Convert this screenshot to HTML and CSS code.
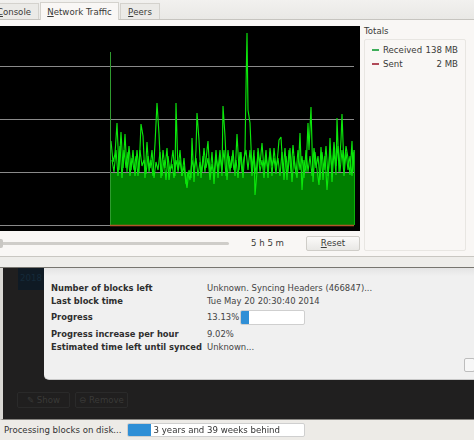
FILE: index.html
```html
<!DOCTYPE html>
<html lang="en">
<head>
<meta charset="utf-8">
<title>Network Traffic</title>
<link rel="stylesheet" href="styles.css">
</head>
<body>
<div class="screen">
  <section class="debug-window">
    <nav class="tabs">
      <span class="tab tab-first"><u>C</u>onsole</span>
      <span class="tab tab-active"><u>N</u>etwork Traffic</span>
      <span class="tab tab-last"><u>P</u>eers</span>
    </nav>
    <div class="panel">
      <div class="graph-col">
        <svg class="graph" viewBox="0 26 360 205" width="360" height="205" aria-hidden="true">
          <rect class="graph-bg" x="0" y="26" width="360" height="205"/>
          <g class="graph-grid">
            <line x1="0" y1="66.5" x2="354" y2="66.5"/>
            <line x1="0" y1="119.5" x2="354" y2="119.5"/>
            <line x1="0" y1="172.5" x2="354" y2="172.5"/>
            <line x1="0" y1="225.5" x2="354" y2="225.5"/>
          </g>
          <rect class="graph-fill" x="110" y="173" width="245" height="52"/>
          <polyline class="graph-trace" points="112,160 114,172 116,150 118,176 120,146 122,178 124,150 126,168 128,152 130,176 132,158 134,170 136,156 138,176 140,150 142,166 144,160 146,174 148,156 150,168 152,150 154,178 156,162 158,170 160,152 162,176 164,160 166,180 168,156 170,172 172,164 174,178 176,160 178,170 180,150 182,176 184,166 186,184 188,172 190,180 192,160 194,170 196,158 198,176 200,162 202,172 204,148 206,168 208,158 210,180 212,164 214,176 216,150 218,178 220,156 222,170 224,150 226,176 228,150 230,172 232,156 234,170 236,160 238,178 240,152 242,172 244,158 246,150 248,170 250,150 252,176 254,156 256,174 258,152 260,172 262,160 264,178 266,156 268,170 270,152 272,176 274,148 276,168 278,158 280,176 282,152 284,180 286,156 288,172 290,148 292,182 294,156 296,174 298,150 300,170 302,156 304,178 306,150 308,172 310,156 312,176 314,148 316,168 318,156 320,180 322,152 324,170 326,146 328,176 330,150 332,170 334,142 336,166 338,146 340,172 342,150 344,176 346,152 348,170 350,156 352,176 354,152"/>
          <polyline class="graph-trace" points="111,141 113,162 115,154 117,123 119,170 121,132 123,168 125,134 127,172 129,146 131,170 133,150 135,176 137,150 139,172 141,124 143,136 145,178 147,142 149,172 151,160 153,176 155,144 157,103 159,134 161,178 163,150 165,168 167,148 169,180 171,165 173,150 175,176 176,103 178,172 180,160 182,176 184,158 186,182 187,188 189,170 191,178 192,138 194,182 196,150 197,113 199,140 201,178 203,156 205,172 207,150 208,141 210,176 212,152 214,184 216,156 218,170 220,150 222,176 223,106 225,136 227,180 229,156 231,168 233,150 235,176 237,134 239,170 241,152 243,178 245,150 246,88 247,33 248,110 250,123 252,170 254,150 255,195 257,172 258,148 260,165 262,143 264,170 266,150 268,178 270,148 272,166 274,158 276,174 278,152 279,140 281,137 283,172 285,148 287,180 289,150 291,172 293,145 295,168 297,178 299,155 300,133 302,190 304,160 306,172 308,123 309,150 311,107 313,182 315,152 317,170 319,185 321,147 323,180 325,156 327,190 329,165 330,138 332,182 334,150 336,175 337,118 339,172 341,140 342,114 344,168 346,146 348,158 350,175 352,141 353,172 354,150"/>
          <line class="graph-first" x1="110.5" y1="52" x2="110.5" y2="225"/>
          <line class="graph-edge" x1="354.5" y1="150" x2="354.5" y2="225"/>
          <line class="graph-sent" x1="110" y1="225.5" x2="354" y2="225.5"/>
        </svg>
        <div class="controls">
          <div class="slider"><span class="slider-handle"></span></div>
          <span class="duration">5 h 5 m</span>
          <span class="button reset"><u>R</u>eset</span>
        </div>
      </div>
      <div class="totals-col">
        <div class="totals-title">Totals</div>
        <div class="totals-box">
          <div class="total-row"><i class="swatch swatch-green"></i><span class="total-name">Received</span><span>138 MB</span></div>
          <div class="total-row"><i class="swatch swatch-red"></i><span class="total-name">Sent</span><span>2 MB</span></div>
        </div>
      </div>
    </div>
    <div class="window-foot"></div>
  </section>

  <section class="main-window">
    <div class="dim-date">2018</div>
    <div class="dim-actions">
      <span class="dim-button">✎ Show</span>
      <span class="dim-button">⊖ Remove</span>
    </div>
    <div class="sync-dialog">
      <div class="sync-grid">
        <b>Number of blocks left</b><span>Unknown. Syncing Headers (466847)...</span>
        <b>Last block time</b><span>Tue May 20 20:30:40 2014</span>
        <b>Progress</b>
        <span class="progress-cell">13.13%<span class="bar bar-sync"><span class="bar-value"></span></span></span>
        <b>Progress increase per hour</b><span>9.02%</span>
        <b>Estimated time left until synced</b><span>Unknown...</span>
      </div>
      <span class="hide-button"></span>
    </div>
  </section>

  <footer class="statusbar">
    <span>Processing blocks on disk...</span>
    <span class="bar bar-status"><span class="bar-value"></span><span class="bar-label">3 years and 39 weeks behind</span></span>
  </footer>
</div>
</body>
</html>
```
FILE: styles.css
```css
* { box-sizing: border-box; }
html, body { margin: 0; padding: 0; }
body {
  width: 474px;
  height: 440px;
  overflow: hidden;
  font-family: "DejaVu Sans", sans-serif;
  font-size: 8.6px;
  color: #3a3a38;
  background: #1f1f1f;
}
.screen {
  display: grid;
  grid-template-rows: 268px 152px 20px;
  width: 474px;
  height: 440px;
  filter: blur(0.35px);
}

/* Debug window */
.debug-window {
  display: flex;
  flex-direction: column;
  background: #f9f7f5;
  border-bottom: 1px solid #77756f;
  overflow: hidden;
}
.tabs {
  display: flex;
  align-items: flex-end;
  height: 20px;
  flex: none;
  background: linear-gradient(#f2f1ef, #e9e8e5);
  border-bottom: 1px solid #c6c4bf;
}
.tab {
  display: flex;
  align-items: center;
  justify-content: center;
  height: 16px;
  margin-right: 1px;
  white-space: pre;
  background: #ebeae7;
  border: 1px solid #d4d2cd;
  border-bottom: 0;
}
.tab-first {
  width: 50px;
  margin-left: -11px;
}
.tab-active {
  width: 79px;
  height: 18px;
  margin-bottom: -1px;
  background: #f9f7f5;
}
.tab-last { width: 40px; }
.panel {
  display: flex;
  flex: 1;
  padding-top: 6px;
}
.graph-col {
  display: flex;
  flex-direction: column;
  width: 360px;
  flex: none;
}
.graph { display: block; flex: none; }
.graph-bg { fill: #000; }
.graph-fill { fill: #007f00; }
.graph-trace { fill: none; stroke: #0be60b; stroke-width: 1.15; stroke-linejoin: bevel; }
.graph-grid line { stroke: #8a8a8a; stroke-width: 1; }
.graph-first { stroke: #2f9a2f; stroke-width: 1; }
.graph-edge { stroke: #0bb00b; stroke-width: 1; }
.graph-sent { stroke: #b0562a; stroke-width: 1.6; }
.controls {
  display: flex;
  align-items: center;
  height: 24px;
}
.slider {
  position: relative;
  width: 229px;
  height: 3px;
  flex: none;
  background: #cfcdc9;
  border-radius: 2px;
}
.slider-handle {
  position: absolute;
  left: -3px;
  top: -3px;
  width: 6px;
  height: 9px;
  border-radius: 2px;
  background: #c9c7c3;
}
.duration { width: 77px; text-align: center; flex: none; }
.button {
  display: flex;
  align-items: center;
  justify-content: center;
  white-space: pre;
  border: 1px solid #cfcdc8;
  border-radius: 2px;
  background: linear-gradient(#fbfaf9, #e9e8e5);
}
.reset { width: 54px; height: 15px; }
.totals-col {
  display: flex;
  flex-direction: column;
  width: 102px;
  margin-left: 4px;
  flex: none;
}
.totals-title { height: 13px; line-height: 10px; }
.totals-box {
  display: flex;
  flex-direction: column;
  gap: 4px;
  width: 102px;
  height: 212px;
  padding: 5px 7px 0 7px;
  border: 1px solid #e8e6e2;
  border-radius: 2px;
}
.total-row { display: flex; align-items: center; height: 10px; }
.total-name { flex: 1; }
.swatch { display: block; width: 7px; height: 2px; margin-right: 4px; flex: none; }
.swatch-green { background: #3fae5a; }
.swatch-red { background: #b04a58; }
.window-foot {
  flex: none;
  height: 11px;
  background: #eeedea;
  border-top: 1px solid #c9c7c2;
}

/* Dimmed main window */
.main-window {
  position: relative;
  display: flex;
  flex-direction: column;
  justify-content: flex-end;
  padding: 0 0 11px 14px;
  background: #201f1f;
  border-left: 3px solid #d9d7d3;
  border-bottom: 1px solid #85837f;
}
.dim-date {
  position: absolute;
  left: 15px;
  top: 0;
  width: 26px;
  height: 22px;
  padding: 5px 0 0 2px;
  background: #0f1a24;
  color: #152a3a;
}
.dim-actions { display: flex; gap: 5px; }
.dim-button {
  display: flex;
  align-items: center;
  justify-content: center;
  width: 53px;
  height: 16px;
  color: #3a3a38;
  border: 1px solid #2a2a2a;
  border-radius: 2px;
}
.sync-dialog {
  position: absolute;
  left: 41px;
  top: 0;
  right: 0;
  height: 112px;
  padding: 13px 0 0 7px;
  font-size: 8.45px;
  background: linear-gradient(#e4e4e4, #f0f0f0 8px);
  border-bottom-left-radius: 5px;
  border-bottom: 1px solid #c8c8c8;
}
.sync-grid {
  display: grid;
  grid-template-columns: 156px 1fr;
  grid-template-rows: 13px 13px 20px 13px 13px;
  align-items: center;
  color: #444;
}
.sync-grid b { color: #2e2e2e; font-size: 8.35px; white-space: nowrap; }
.progress-cell { display: flex; align-items: center; gap: 1px; }
.bar {
  display: flex;
  background: #fff;
  border: 1px solid #cfcfcf;
  border-radius: 2px;
  overflow: hidden;
}
.bar-value {
  display: block;
  background: #2f8fd6;
  flex: none;
}
.bar-sync { width: 65px; height: 15px; }
.bar-sync .bar-value { width: 8px; }
.hide-button {
  position: absolute;
  right: -1px;
  top: 90px;
  width: 11px;
  height: 14px;
  background: #f7f7f7;
  border: 1px solid #bdbdbd;
  border-radius: 2px;
}

/* Status bar */
.statusbar {
  display: flex;
  align-items: center;
  gap: 5px;
  padding: 0 0 0 4px;
  background: #edebe7;
  color: #333;
}
.bar-status { width: 178px; height: 14px; }
.bar-status .bar-value { width: 23px; }
.bar-label { padding-left: 3px; line-height: 12px; }
```
